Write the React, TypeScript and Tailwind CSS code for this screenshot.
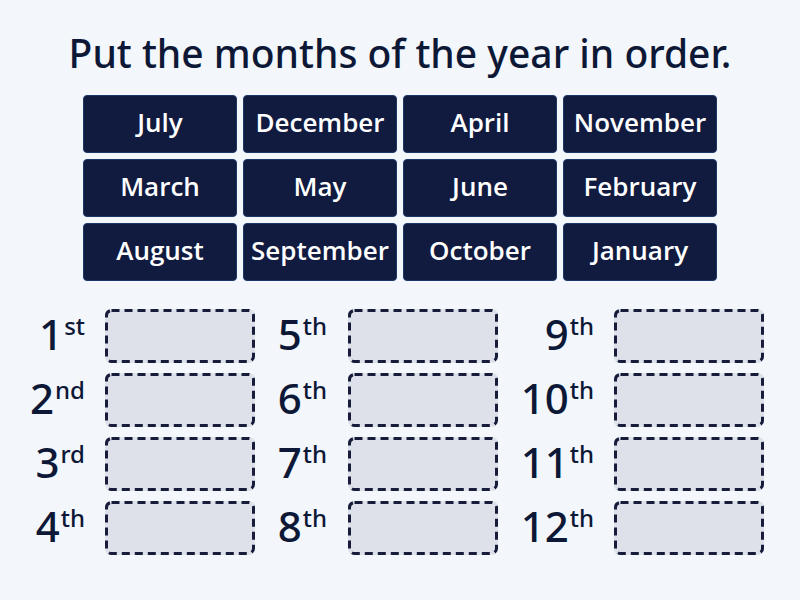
const months = [
  'July', 'December', 'April', 'November',
  'March', 'May', 'June', 'February',
  'August', 'September', 'October', 'January',
]

const groups: { labelWidth: string; ml: string; gap: string; items: [string, string][] }[] = [
  { labelWidth: 'w-[65px]', ml: 'ml-[20px]', gap: 'gap-x-[20px]', items: [['1', 'st'], ['2', 'nd'], ['3', 'rd'], ['4', 'th']] },
  { labelWidth: 'w-[72px]', ml: 'ml-0', gap: 'gap-x-[21px]', items: [['5', 'th'], ['6', 'th'], ['7', 'th'], ['8', 'th']] },
  { labelWidth: 'w-[80px]', ml: 'ml-[16px]', gap: 'gap-x-[20px]', items: [['9', 'th'], ['10', 'th'], ['11', 'th'], ['12', 'th']] },
]

function DropSlot() {
  return (
    <div className="relative h-[54px] w-[150px] rounded-[6px] bg-[#dfe1ea]">
      <svg className="absolute inset-0" width="150" height="54" viewBox="0 0 150 54">
        <rect
          x="1.5"
          y="1.5"
          width="147"
          height="51"
          rx="5"
          fill="none"
          stroke="#161c3a"
          strokeWidth="3"
          strokeDasharray="8 5"
        />
      </svg>
    </div>
  )
}

export default function App() {
  return (
    <div className="h-[600px] w-[800px] overflow-hidden bg-[#f3f6fb] font-['Open_Sans',sans-serif] text-[#0d1836]">
      <h1 className="pt-[26px] text-center font-['Noto_Sans',sans-serif] text-[39px] leading-[54px] font-medium">
        Put the months of the year in order.
      </h1>
      <div className="mx-auto mt-[15px] grid w-[634px] grid-cols-4 gap-x-[6px] gap-y-[6px]">
        {months.map((m) => (
          <div
            key={m}
            className="flex h-[58px] items-center justify-center rounded-[4px] border border-[#1d3566] bg-[#111a3f] pb-[4px] text-[26px] font-semibold text-white"
          >
            {m}
          </div>
        ))}
      </div>
      <div className="mt-[28px] flex font-['Noto_Sans',sans-serif]">
        {groups.map((g, gi) => (
          <div key={gi} className={`grid grid-cols-[auto_150px] gap-y-[10px] ${g.gap} ${g.ml}`}>
            {g.items.map(([n, suf]) => (
              <div key={n} className="contents">
                <div className={`flex h-[54px] items-center justify-end pb-[4px] ${g.labelWidth}`}>
                  <span className="text-[42px] leading-none font-medium">{n}</span>
                  <span className="mb-[17px] ml-[1px] text-[24px] leading-none font-medium">{suf}</span>
                </div>
                <DropSlot />
              </div>
            ))}
          </div>
        ))}
      </div>
    </div>
  )
}
